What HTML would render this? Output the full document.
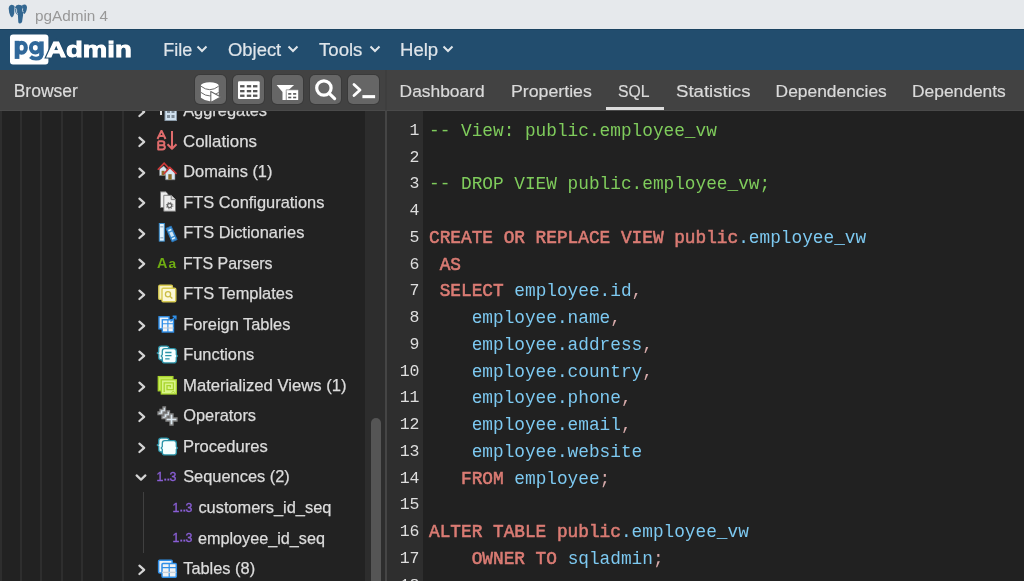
<!DOCTYPE html>
<html><head><meta charset="utf-8">
<style>
html,body{margin:0;padding:0;width:1024px;height:581px;overflow:hidden;background:#222;}
body{position:relative;font-family:"Liberation Sans",sans-serif;will-change:transform;}
.a{position:absolute;white-space:pre;}
#title{left:0;top:0;width:1024px;height:29px;background:#e6e9ec;}
#titleline{left:0;top:29px;width:1024px;height:1px;background:#1b4361;}
#menu{left:0;top:29px;width:1024px;height:41px;background:#224d6e;}
#hdr{left:0;top:70px;width:1024px;height:41px;background:#424242;}
#tree{left:0;top:111px;width:365px;height:470px;background:#222;overflow:hidden;}
#sbtrack{left:365px;top:111px;width:20px;height:470px;background:#2d2d2d;}
#sbthumb{left:371px;top:418px;width:10px;height:200px;background:#555;border-radius:5px;}
#divider{left:385px;top:70px;width:2px;height:40px;background:#3e3e3e;}
#divider2{left:385px;top:110px;width:2px;height:471px;background:#454545;}
#hline{left:0;top:110px;width:1024px;height:1px;background:#4a4a4a;}
#gutter{left:387px;top:111px;width:36px;height:470px;background:#2e2e2e;}
#code{left:423px;top:111px;width:601px;height:470px;background:#212121;}
.menuitem{color:#dfe5ea;-webkit-text-stroke:0.2px #dfe5ea;font-size:18px;line-height:20px;top:39.6px;}
.tab{color:#dadada;-webkit-text-stroke:0.2px #dadada;font-size:17.4px;line-height:20px;top:80.7px;transform-origin:0 0;}
.btn{position:absolute;top:75px;width:31px;height:29px;background:#666;border-radius:5px;box-shadow:0 0 0 1px #3a3a3a;}
.btn svg{position:absolute;left:0;top:0;}
.gl{position:absolute;top:111px;width:2px;height:470px;background:#2e2e2e;}
.row{position:absolute;color:#dcdcdc;line-height:20px;white-space:pre;-webkit-text-stroke:0.25px #dcdcdc;}
.ic{position:absolute;}
.ln{position:absolute;white-space:pre;color:#dedede;font-family:"Liberation Mono",monospace;text-align:right;width:30px;}
.cl{position:absolute;white-space:pre;left:429px;font-family:"Liberation Mono",monospace;color:#d6aaaa;}
.k{color:#db7c74;font-weight:normal;-webkit-text-stroke:0.55px #db7c74;display:inline-block;transform:scaleY(1.08);transform-origin:0 18.1px;}
.v{color:#7dc9f1;}
.c{color:#7fcc5c;}
.p{color:#d6aaaa;}
</style></head><body>
<div id="title" class="a"></div>
<div id="menu" class="a"></div>
<div id="titleline" class="a"></div>
<div id="hdr" class="a"></div>
<div id="tree" class="a"></div>
<div id="sbtrack" class="a"></div>
<div id="sbthumb" class="a"></div>
<div id="gutter" class="a"></div>
<div id="code" class="a"></div>
<div id="hline" class="a"></div>
<div id="divider" class="a"></div>
<div id="divider2" class="a"></div>
<svg class="a" style="left:0;top:0" width="32" height="28" viewBox="0 0 32 28"><g fill="#336791">
<path d="M8.7 8.5 Q8.8 5.4 11.5 4.8 Q13.6 4.7 14.6 6.3 L14.2 13.5 Q13.6 16.8 11.9 17.6 Q10 16 9.2 12.8 Z"/>
<path d="M15.1 7.2 Q15.8 4.6 18.5 4.7 Q21.5 4.6 22.6 6.2 L23.1 14.9 Q22.6 18 22.1 21.8 Q21.5 23.6 20 23.6 Q18.6 23.5 18.3 22.2 L17.9 14.9 Q15.7 13.8 15.3 11.9 Z"/>
<path d="M22.2 5 Q23.6 4.5 25.2 4.6 Q27.2 5.6 27 7.6 Q26.8 10 26.1 11.5 Q25.4 13.2 24.4 14 Q23 13.4 22.4 11.9 Z"/></g>
<g stroke="#e6e9ec" stroke-width="0.8" fill="none"><path d="M15.6 8 Q17.2 9.5 16.6 12.2 Q16.8 13.8 18 14.2"/><path d="M22.7 8.4 Q21.9 10.6 23.3 12.2"/></g>
</svg>
<div class="a" style="left:35px;top:6.8px;font-size:15.3px;line-height:18px;color:#989898">pgAdmin 4</div>
<svg class="a" style="left:0;top:29px" width="140" height="41" viewBox="0 0 140 41">
<rect x="10" y="5.6" width="38.4" height="29.9" rx="3" fill="#fff"/>
<g fill="none" stroke="#30689a">
<ellipse cx="21.6" cy="18.65" rx="4.2" ry="4.95" stroke-width="4.1"/>
<ellipse cx="35.3" cy="18.8" rx="4.4" ry="4.7" stroke-width="4"/>
<path d="M41.45 25.5 Q41.45 29.6 36 29.6 Q32.4 29.6 30.4 27.6" stroke-width="3.9"/>
</g>
<rect x="14.7" y="11.8" width="4.7" height="18.1" fill="#30689a"/>
<rect x="39.2" y="12.4" width="4.5" height="14" fill="#30689a"/>
<text x="46.2" y="28.4" font-family="Liberation Sans" font-weight="bold" font-size="22.5" textLength="85.5" lengthAdjust="spacingAndGlyphs" fill="#fff" stroke="#224d6e" stroke-width="3" paint-order="stroke fill">Admin</text>
<text x="46.2" y="28.4" font-family="Liberation Sans" font-weight="bold" font-size="22.5" textLength="85.5" lengthAdjust="spacingAndGlyphs" fill="#fff" stroke="#fff" stroke-width="0.9">Admin</text>
</svg>
<div class="a menuitem" style="left:163.2px">File</div>
<div class="a menuitem" style="left:228.4px;transform-origin:0 0;transform:scaleX(1.023)">Object</div>
<div class="a menuitem" style="left:319.3px;transform-origin:0 0;transform:scaleX(1.033)">Tools</div>
<div class="a menuitem" style="left:399.6px;transform-origin:0 0;transform:scaleX(1.03)">Help</div>
<svg class="a" style="left:196px;top:45px" width="12" height="8"><path d="M1.5 1.5 L6 6 L10.5 1.5" stroke="#dfe5ea" stroke-width="2" fill="none"/></svg>
<svg class="a" style="left:287px;top:45px" width="12" height="8"><path d="M1.5 1.5 L6 6 L10.5 1.5" stroke="#dfe5ea" stroke-width="2" fill="none"/></svg>
<svg class="a" style="left:369px;top:45px" width="12" height="8"><path d="M1.5 1.5 L6 6 L10.5 1.5" stroke="#dfe5ea" stroke-width="2" fill="none"/></svg>
<svg class="a" style="left:442px;top:45px" width="12" height="8"><path d="M1.5 1.5 L6 6 L10.5 1.5" stroke="#dfe5ea" stroke-width="2" fill="none"/></svg>
<div class="a" style="left:13.7px;top:80.8px;font-size:17.5px;line-height:20px;color:#dcdcdc;-webkit-text-stroke:0.2px #dcdcdc">Browser</div>
<div class="btn" style="left:195px"><svg width="31" height="29" viewBox="0 0 31 29"><path d="M5.9 10.5 A8.9 3.3 0 0 1 23.7 10.5 V22.8 Q14.8 29.6 5.9 22.8 Z" fill="#fff"/>
 <path d="M5.9 11.2 Q14.8 18.2 23.7 11.2 M5.9 17.4 Q14.8 24.4 23.7 17.4" stroke="#6a6a6a" stroke-width="1" fill="none"/>
 <path d="M15.8 16.4 V27.4 L25.8 21.9 Z" fill="#fff" stroke="#666" stroke-width="1.1" stroke-linejoin="round"/></svg></div>
<div class="btn" style="left:233.4px"><svg width="31" height="29" viewBox="0 0 31 29"><rect x="5" y="6.2" width="21.7" height="17.8" rx="1.2" fill="#fff"/>
 <g fill="#555"><rect x="7.1" y="10.1" width="4.4" height="2.3"/><rect x="13.8" y="10.1" width="4.4" height="2.3"/><rect x="20" y="10.1" width="4.4" height="2.3"/>
 <rect x="7.1" y="15" width="4.4" height="2.3"/><rect x="13.8" y="15" width="4.4" height="2.3"/><rect x="20" y="15" width="4.4" height="2.3"/>
 <rect x="7.1" y="19.6" width="4.4" height="2.3"/><rect x="13.8" y="19.6" width="4.4" height="2.3"/><rect x="20" y="19.6" width="4.4" height="2.3"/></g></svg></div>
<div class="btn" style="left:271.6px"><svg width="31" height="29" viewBox="0 0 31 29"><path d="M4.6 10.1 H22.1 L14.4 17 V25 H10.5 V17 Z" fill="#fff"/>
 <rect x="14.4" y="15" width="11.8" height="10" fill="#fff"/><path d="M14.2 25 V14.8 H26.2" stroke="#8a8a8a" stroke-width="0.8" fill="none"/>
 <g fill="#555"><rect x="16.2" y="18.1" width="3.1" height="1.6"/><rect x="21.1" y="18.1" width="3.1" height="1.6"/><rect x="16.2" y="21.7" width="3.1" height="1.6"/><rect x="21.1" y="21.7" width="3.1" height="1.6"/></g></svg></div>
<div class="btn" style="left:309.8px"><svg width="31" height="29" viewBox="0 0 31 29"><circle cx="13.9" cy="13" r="7.2" fill="none" stroke="#fff" stroke-width="3.2"/>
 <path d="M19.2 18.4 L24.6 23.6" stroke="#fff" stroke-width="3.2" stroke-linecap="round"/></svg></div>
<div class="btn" style="left:348px"><svg width="31" height="29" viewBox="0 0 31 29"><path d="M6 9.4 L12 15 L6 20.6" fill="none" stroke="#fff" stroke-width="2.8" stroke-linecap="round" stroke-linejoin="round"/>
 <rect x="14.4" y="20.1" width="12.7" height="3.1" fill="#fff"/></svg></div>
<div class="a tab" style="left:399.6px;transform:scaleX(1)">Dashboard</div>
<div class="a tab" style="left:511.2px;transform:scaleX(1.02)">Properties</div>
<div class="a tab" style="left:618.3px;transform:scaleX(0.906)">SQL</div>
<div class="a tab" style="left:675.8px;transform:scaleX(1.07)">Statistics</div>
<div class="a tab" style="left:775.6px;transform:scaleX(1)">Dependencies</div>
<div class="a tab" style="left:912px;transform:scaleX(1)">Dependents</div>
<div class="a" style="left:606px;top:107px;width:57.5px;height:3px;background:#dcdcdc"></div>
<div class="gl" style="left:0px"></div>
<div class="gl" style="left:20px"></div>
<div class="gl" style="left:40.2px"></div>
<div class="gl" style="left:60.6px"></div>
<div class="gl" style="left:81.1px"></div>
<div class="gl" style="left:101.6px"></div>
<div class="gl" style="left:122.1px"></div>
<div class="a" style="left:0;top:111px;width:365px;height:470px;overflow:hidden">
<div class="a" style="left:142.5px;top:380.8px;width:1.5px;height:61px;background:#404040"></div>
<div class="row" style="left:183.2px;top:-10.90px;font-size:16.4px;transform-origin:0 0;transform:scaleX(1)">Aggregates</div>
<svg class="ic" style="left:136.8px;top:-6.20px" width="10" height="14"><path d="M2.4 2.6 L7.2 6.8 L2.4 11" stroke="#d4d4d4" stroke-width="2.2" stroke-linecap="round" stroke-linejoin="round" fill="none"/></svg>
<svg class="ic" style="left:156px;top:-11.20px" width="22" height="22" viewBox="0 0 22 22"><rect x="9" y="6" width="11.5" height="14.5" fill="#cfe0ee" stroke="#8a9aa8" stroke-width="1"/>
<rect x="11" y="10" width="3" height="3" fill="#7d8a96"/><rect x="15.5" y="10" width="3" height="3" fill="#7d8a96"/>
<rect x="11" y="15" width="3" height="3" fill="#7d8a96"/><rect x="15.5" y="15" width="3" height="3" fill="#7d8a96"/>
<rect x="4" y="8" width="2" height="7" fill="#ddd"/></svg>
<div class="row" style="left:183.2px;top:19.63px;font-size:16.4px;transform-origin:0 0;transform:scaleX(1.028)">Collations</div>
<svg class="ic" style="left:136.8px;top:24.33px" width="10" height="14"><path d="M2.4 2.6 L7.2 6.8 L2.4 11" stroke="#d4d4d4" stroke-width="2.2" stroke-linecap="round" stroke-linejoin="round" fill="none"/></svg>
<svg class="ic" style="left:156px;top:19.33px" width="22" height="22" viewBox="0 0 22 22"><g stroke="#e06c6c" stroke-width="2" fill="none" stroke-linejoin="round">
<path d="M1.5 9 L5.5 0.6 L9.5 9 M3.1 6.1 H7.9"/>
<path d="M2.2 11.2 V19.4 H6.4 Q8.9 19.4 8.9 17.3 Q8.9 15.2 6.3 15.2 H2.2 M2.2 15.2 H6 Q8.4 15.2 8.4 13.2 Q8.4 11.2 6 11.2 H2.2"/>
<path d="M16 1 V19 M11.5 14.3 L16 18.8 L20.5 14.3"/></g></svg>
<div class="row" style="left:183.2px;top:50.16px;font-size:16.4px;transform-origin:0 0;transform:scaleX(1)">Domains (1)</div>
<svg class="ic" style="left:136.8px;top:54.86px" width="10" height="14"><path d="M2.4 2.6 L7.2 6.8 L2.4 11" stroke="#d4d4d4" stroke-width="2.2" stroke-linecap="round" stroke-linejoin="round" fill="none"/></svg>
<svg class="ic" style="left:156px;top:49.86px" width="22" height="22" viewBox="0 0 22 22"><g>
<path d="M3.5 8 V14.5 H10.5 V8 L7.7 5 Z" fill="#d6e6f2" stroke="#777" stroke-width="0.6"/>
<path d="M1.8 8.8 L8.1 2.2 L13 7.2" stroke="#d13a3a" stroke-width="1.6" fill="none"/>
<rect x="5.6" y="9.8" width="3" height="4.5" fill="#8a6a2a"/>
<path d="M9.5 12 V18.8 H19 V12 L14 7 Z" fill="#d6e6f2" stroke="#777" stroke-width="0.6"/>
<path d="M7.6 13 L13.8 6.4 L20.6 12.9" stroke="#d13a3a" stroke-width="1.6" fill="none"/>
<rect x="12.3" y="13.2" width="3.4" height="5.4" fill="#8a6a2a"/></g></svg>
<div class="row" style="left:183.2px;top:80.69px;font-size:16.4px;transform-origin:0 0;transform:scaleX(1)">FTS Configurations</div>
<svg class="ic" style="left:136.8px;top:85.39px" width="10" height="14"><path d="M2.4 2.6 L7.2 6.8 L2.4 11" stroke="#d4d4d4" stroke-width="2.2" stroke-linecap="round" stroke-linejoin="round" fill="none"/></svg>
<svg class="ic" style="left:156px;top:80.39px" width="22" height="22" viewBox="0 0 22 22"><path d="M4.5 0.8 H10 L12 3 V16.5 H4.5 Z" fill="#eee" stroke="#777" stroke-width="0.9"/>
<path d="M7.8 4.3 H15.2 L19.5 8.6 V20.2 H7.8 Z" fill="#efefef" stroke="#777" stroke-width="0.9"/>
<path d="M15.2 4.3 V8.6 H19.5" fill="#ddd" stroke="#777" stroke-width="0.9"/>
<circle cx="13.6" cy="14.6" r="2.1" fill="none" stroke="#666" stroke-width="1.3"/>
<circle cx="13.6" cy="14.6" r="3.3" fill="none" stroke="#777" stroke-width="1" stroke-dasharray="1.3 1.3"/></svg>
<div class="row" style="left:183.2px;top:111.22px;font-size:16.4px;transform-origin:0 0;transform:scaleX(1)">FTS Dictionaries</div>
<svg class="ic" style="left:136.8px;top:115.92px" width="10" height="14"><path d="M2.4 2.6 L7.2 6.8 L2.4 11" stroke="#d4d4d4" stroke-width="2.2" stroke-linecap="round" stroke-linejoin="round" fill="none"/></svg>
<svg class="ic" style="left:156px;top:110.92px" width="22" height="22" viewBox="0 0 22 22"><rect x="3.3" y="1.5" width="5" height="17.6" fill="#e6f4fc" stroke="#3c8fcf" stroke-width="1"/>
<rect x="4.3" y="4.2" width="3" height="1.2" fill="#9ab"/><rect x="4.3" y="15.2" width="3" height="1.2" fill="#9ab"/>
<g transform="rotate(-24 15.6 12)"><rect x="12.8" y="4.6" width="5.6" height="14.8" fill="#3d90d2" stroke="#2a74b8" stroke-width="0.8"/>
<rect x="14" y="7" width="3.2" height="1.5" fill="#e8f4fc"/><rect x="14" y="10" width="3.2" height="4.5" fill="#cfe6f7"/><rect x="14" y="16" width="3.2" height="1.5" fill="#e8f4fc"/></g></svg>
<div class="row" style="left:183.2px;top:141.75px;font-size:16.4px;transform-origin:0 0;transform:scaleX(0.974)">FTS Parsers</div>
<svg class="ic" style="left:136.8px;top:146.45px" width="10" height="14"><path d="M2.4 2.6 L7.2 6.8 L2.4 11" stroke="#d4d4d4" stroke-width="2.2" stroke-linecap="round" stroke-linejoin="round" fill="none"/></svg>
<svg class="ic" style="left:156px;top:141.45px" width="22" height="22" viewBox="0 0 22 22"><text x="1" y="16.4" font-family="Liberation Sans" font-weight="bold" font-size="14.6" fill="#6fad12" textLength="10.4" lengthAdjust="spacingAndGlyphs">A</text>
<text x="12.4" y="16.4" font-family="Liberation Sans" font-weight="bold" font-size="13" fill="#6fad12" textLength="7.6" lengthAdjust="spacingAndGlyphs">a</text></svg>
<div class="row" style="left:183.2px;top:172.28px;font-size:16.4px;transform-origin:0 0;transform:scaleX(1)">FTS Templates</div>
<svg class="ic" style="left:136.8px;top:176.98px" width="10" height="14"><path d="M2.4 2.6 L7.2 6.8 L2.4 11" stroke="#d4d4d4" stroke-width="2.2" stroke-linecap="round" stroke-linejoin="round" fill="none"/></svg>
<svg class="ic" style="left:156px;top:171.98px" width="22" height="22" viewBox="0 0 22 22"><rect x="2.8" y="2.2" width="13.6" height="14.2" rx="1.2" fill="#f7f2c4" stroke="#d8cb52" stroke-width="1.4"/>
<rect x="6" y="5.2" width="13.8" height="13.6" rx="1.2" fill="#fbf8d8" stroke="#d8cb52" stroke-width="1.4"/>
<circle cx="12" cy="11.3" r="2.6" fill="none" stroke="#cbbd45" stroke-width="1.3"/>
<path d="M13.9 13.2 L16.3 15.6" stroke="#cbbd45" stroke-width="1.4"/></svg>
<div class="row" style="left:183.2px;top:202.81px;font-size:16.4px;transform-origin:0 0;transform:scaleX(1)">Foreign Tables</div>
<svg class="ic" style="left:136.8px;top:207.51px" width="10" height="14"><path d="M2.4 2.6 L7.2 6.8 L2.4 11" stroke="#d4d4d4" stroke-width="2.2" stroke-linecap="round" stroke-linejoin="round" fill="none"/></svg>
<svg class="ic" style="left:156px;top:202.51px" width="22" height="22" viewBox="0 0 22 22"><rect x="3" y="2.8" width="10" height="12" fill="#eef4fa" stroke="#2f8fe8" stroke-width="1.4"/>
<rect x="6.3" y="5.8" width="11.2" height="12.2" fill="#f2f5f8" stroke="#2f8fe8" stroke-width="1.4"/>
<path d="M6.3 9.8 H17.5 M11.9 5.8 V18" stroke="#2f8fe8" stroke-width="1.1"/>
<path d="M6.3 14 H17.5" stroke="#bcc8d4" stroke-width="1"/>
<path d="M14.5 7.5 L19.6 2.6 M16.6 2.3 H19.9 V5.6" stroke="#2f8fe8" stroke-width="1.4" fill="none"/></svg>
<div class="row" style="left:183.2px;top:233.34px;font-size:16.4px;transform-origin:0 0;transform:scaleX(1)">Functions</div>
<svg class="ic" style="left:136.8px;top:238.04px" width="10" height="14"><path d="M2.4 2.6 L7.2 6.8 L2.4 11" stroke="#d4d4d4" stroke-width="2.2" stroke-linecap="round" stroke-linejoin="round" fill="none"/></svg>
<svg class="ic" style="left:156px;top:233.04px" width="22" height="22" viewBox="0 0 22 22"><path d="M5.2 2.1 H10.5 Q13 2.1 13 4.6 V14 Q13 16 10.5 16 H5.2 Q2.7 16 2.7 13.5 V10.3 L1.3 9.1 L2.7 7.9 V4.6 Q2.7 2.1 5.2 2.1 Z" fill="#effafa" stroke="#2a93a8" stroke-width="1.3"/><path d="M8.8 4.7 H17.8 Q20.3 4.7 20.3 7.2 V10.6 L21.4 12 L20.3 13.4 V16.4 Q20.3 18.9 17.8 18.9 H8.8 Q6.3 18.9 6.3 16.4 V13.4 L5.2 12 L6.3 10.6 V7.2 Q6.3 4.7 8.8 4.7 Z" fill="#f6ffff" stroke="#2a93a8" stroke-width="1.3"/><path d="M9.2 8.5 H15.5 M9.2 11.6 H15.5 M9.2 14.9 H13.6" stroke="#2a93a8" stroke-width="1.4"/></svg>
<div class="row" style="left:183.2px;top:263.87px;font-size:16.4px;transform-origin:0 0;transform:scaleX(1.017)">Materialized Views (1)</div>
<svg class="ic" style="left:136.8px;top:268.57px" width="10" height="14"><path d="M2.4 2.6 L7.2 6.8 L2.4 11" stroke="#d4d4d4" stroke-width="2.2" stroke-linecap="round" stroke-linejoin="round" fill="none"/></svg>
<svg class="ic" style="left:156px;top:263.57px" width="22" height="22" viewBox="0 0 22 22"><rect x="2.3" y="1.6" width="14.6" height="14.2" fill="#c9ec5e" stroke="#a8d42c" stroke-width="1.3"/>
<rect x="5.3" y="4.8" width="15" height="14.2" fill="#d9f58a" stroke="#a8d42c" stroke-width="1.3"/>
<path d="M8.2 17 V7.8 H17.4 V14.6 H11 V10.6 H14.4 V12.4" fill="none" stroke="#a8d42c" stroke-width="1.3"/>
<path d="M15.5 17.5 L17.2 16.4 L18.9 17.5" fill="none" stroke="#a8d42c" stroke-width="1"/></svg>
<div class="row" style="left:183.2px;top:294.40px;font-size:16.4px;transform-origin:0 0;transform:scaleX(1)">Operators</div>
<svg class="ic" style="left:136.8px;top:299.10px" width="10" height="14"><path d="M2.4 2.6 L7.2 6.8 L2.4 11" stroke="#d4d4d4" stroke-width="2.2" stroke-linecap="round" stroke-linejoin="round" fill="none"/></svg>
<svg class="ic" style="left:156px;top:294.10px" width="22" height="22" viewBox="0 0 22 22"><g fill="#dde8f0" stroke="#858585" stroke-width="1.3">
<path d="M4 4.5 H7 V2 H9.5 V7 H7 V9.5 H2 V7 H4 Z"/>
<path d="M8 8.5 H11 V6 H13.5 V11 H11 V13.5 H6 V11 H8 Z"/>
<path d="M14 9 H17 V13 H21 V16 H17 V20 H14 V16 H10 V13 H14 Z"/></g></svg>
<div class="row" style="left:183.2px;top:324.93px;font-size:16.4px;transform-origin:0 0;transform:scaleX(1.01)">Procedures</div>
<svg class="ic" style="left:136.8px;top:329.63px" width="10" height="14"><path d="M2.4 2.6 L7.2 6.8 L2.4 11" stroke="#d4d4d4" stroke-width="2.2" stroke-linecap="round" stroke-linejoin="round" fill="none"/></svg>
<svg class="ic" style="left:156px;top:324.63px" width="22" height="22" viewBox="0 0 22 22"><path d="M5.2 2.1 H10.5 Q13 2.1 13 4.6 V14 Q13 16 10.5 16 H5.2 Q2.7 16 2.7 13.5 V10.3 L1.3 9.1 L2.7 7.9 V4.6 Q2.7 2.1 5.2 2.1 Z" fill="#effafa" stroke="#2a93a8" stroke-width="1.3"/><path d="M8.8 4.7 H17.8 Q20.3 4.7 20.3 7.2 V10.6 L21.4 12 L20.3 13.4 V16.4 Q20.3 18.9 17.8 18.9 H8.8 Q6.3 18.9 6.3 16.4 V13.4 L5.2 12 L6.3 10.6 V7.2 Q6.3 4.7 8.8 4.7 Z" fill="#f6ffff" stroke="#2a93a8" stroke-width="1.3"/></svg>
<div class="row" style="left:183.2px;top:355.46px;font-size:16.4px;transform-origin:0 0;transform:scaleX(1)">Sequences (2)</div>
<svg class="ic" style="left:134.2px;top:361.76px" width="14" height="10"><path d="M2.6 2.4 L7 6.6 L11.4 2.4" stroke="#d4d4d4" stroke-width="2.2" stroke-linecap="round" stroke-linejoin="round" fill="none"/></svg>
<svg class="ic" style="left:156px;top:355.16px" width="22" height="22" viewBox="0 0 22 22"><g fill="#8a5fd6"><text x="0.6" y="14.6" font-family="Liberation Sans" font-size="12.4" stroke="#8a5fd6" stroke-width="0.35">1</text>
<rect x="8.3" y="12.6" width="1.9" height="2"/><rect x="11.4" y="12.6" width="1.9" height="2"/>
<text x="13.4" y="14.6" font-family="Liberation Sans" font-size="12.4" stroke="#8a5fd6" stroke-width="0.35">3</text></g></svg>
<div class="row" style="left:198.4px;top:385.99px;font-size:16.4px;transform-origin:0 0;transform:scaleX(1)">customers_id_seq</div>
<svg class="ic" style="left:172px;top:385.69px" width="22" height="22" viewBox="0 0 22 22"><g fill="#8a5fd6"><text x="0.6" y="14.6" font-family="Liberation Sans" font-size="12.4" stroke="#8a5fd6" stroke-width="0.35">1</text>
<rect x="8.3" y="12.6" width="1.9" height="2"/><rect x="11.4" y="12.6" width="1.9" height="2"/>
<text x="13.4" y="14.6" font-family="Liberation Sans" font-size="12.4" stroke="#8a5fd6" stroke-width="0.35">3</text></g></svg>
<div class="row" style="left:198.4px;top:416.52px;font-size:16.4px;transform-origin:0 0;transform:scaleX(0.988)">employee_id_seq</div>
<svg class="ic" style="left:172px;top:416.22px" width="22" height="22" viewBox="0 0 22 22"><g fill="#8a5fd6"><text x="0.6" y="14.6" font-family="Liberation Sans" font-size="12.4" stroke="#8a5fd6" stroke-width="0.35">1</text>
<rect x="8.3" y="12.6" width="1.9" height="2"/><rect x="11.4" y="12.6" width="1.9" height="2"/>
<text x="13.4" y="14.6" font-family="Liberation Sans" font-size="12.4" stroke="#8a5fd6" stroke-width="0.35">3</text></g></svg>
<div class="row" style="left:183.2px;top:447.05px;font-size:16.4px;transform-origin:0 0;transform:scaleX(1)">Tables (8)</div>
<svg class="ic" style="left:136.8px;top:451.75px" width="10" height="14"><path d="M2.4 2.6 L7.2 6.8 L2.4 11" stroke="#d4d4d4" stroke-width="2.2" stroke-linecap="round" stroke-linejoin="round" fill="none"/></svg>
<svg class="ic" style="left:156px;top:446.75px" width="22" height="22" viewBox="0 0 22 22"><rect x="2.6" y="2.3" width="13.6" height="12.7" rx="1" fill="#eef2f6" stroke="#2f8fe8" stroke-width="1.5"/>
<rect x="6" y="5.6" width="14.3" height="13.6" rx="1" fill="#f1f3f5" stroke="#2f8fe8" stroke-width="1.5"/>
<path d="M6 9.6 H20.3 M13.2 5.6 V19.2" stroke="#2f8fe8" stroke-width="1.2"/>
<path d="M6 14.4 H20.3" stroke="#c8cfd6" stroke-width="1.4"/></svg>
</div>
<div class="a" style="left:0;top:111px;width:1024px;height:470px;overflow:hidden">
<div class="ln" style="left:389.5px;top:7.00px;font-size:16.5px;line-height:26.74px">1</div>
<div class="cl" style="top:7.00px;font-size:17.78px;line-height:26.74px"><span class="c">-- View: public.employee_vw</span></div>
<div class="ln" style="left:389.5px;top:33.74px;font-size:16.5px;line-height:26.74px">2</div>
<div class="ln" style="left:389.5px;top:60.48px;font-size:16.5px;line-height:26.74px">3</div>
<div class="cl" style="top:60.48px;font-size:17.78px;line-height:26.74px"><span class="c">-- DROP VIEW public.employee_vw;</span></div>
<div class="ln" style="left:389.5px;top:87.22px;font-size:16.5px;line-height:26.74px">4</div>
<div class="ln" style="left:389.5px;top:113.96px;font-size:16.5px;line-height:26.74px">5</div>
<div class="cl" style="top:113.96px;font-size:17.78px;line-height:26.74px"><span class="k">CREATE OR REPLACE VIEW public</span><span class="v">.employee_vw</span></div>
<div class="ln" style="left:389.5px;top:140.70px;font-size:16.5px;line-height:26.74px">6</div>
<div class="cl" style="top:140.70px;font-size:17.78px;line-height:26.74px"> <span class="k">AS</span></div>
<div class="ln" style="left:389.5px;top:167.44px;font-size:16.5px;line-height:26.74px">7</div>
<div class="cl" style="top:167.44px;font-size:17.78px;line-height:26.74px"> <span class="k">SELECT</span> <span class="v">employee.id</span><span class="p">,</span></div>
<div class="ln" style="left:389.5px;top:194.18px;font-size:16.5px;line-height:26.74px">8</div>
<div class="cl" style="top:194.18px;font-size:17.78px;line-height:26.74px">    <span class="v">employee.name</span><span class="p">,</span></div>
<div class="ln" style="left:389.5px;top:220.92px;font-size:16.5px;line-height:26.74px">9</div>
<div class="cl" style="top:220.92px;font-size:17.78px;line-height:26.74px">    <span class="v">employee.address</span><span class="p">,</span></div>
<div class="ln" style="left:389.5px;top:247.66px;font-size:16.5px;line-height:26.74px">10</div>
<div class="cl" style="top:247.66px;font-size:17.78px;line-height:26.74px">    <span class="v">employee.country</span><span class="p">,</span></div>
<div class="ln" style="left:389.5px;top:274.40px;font-size:16.5px;line-height:26.74px">11</div>
<div class="cl" style="top:274.40px;font-size:17.78px;line-height:26.74px">    <span class="v">employee.phone</span><span class="p">,</span></div>
<div class="ln" style="left:389.5px;top:301.14px;font-size:16.5px;line-height:26.74px">12</div>
<div class="cl" style="top:301.14px;font-size:17.78px;line-height:26.74px">    <span class="v">employee.email</span><span class="p">,</span></div>
<div class="ln" style="left:389.5px;top:327.88px;font-size:16.5px;line-height:26.74px">13</div>
<div class="cl" style="top:327.88px;font-size:17.78px;line-height:26.74px">    <span class="v">employee.website</span></div>
<div class="ln" style="left:389.5px;top:354.62px;font-size:16.5px;line-height:26.74px">14</div>
<div class="cl" style="top:354.62px;font-size:17.78px;line-height:26.74px">   <span class="k">FROM</span> <span class="v">employee</span><span class="p">;</span></div>
<div class="ln" style="left:389.5px;top:381.36px;font-size:16.5px;line-height:26.74px">15</div>
<div class="ln" style="left:389.5px;top:408.10px;font-size:16.5px;line-height:26.74px">16</div>
<div class="cl" style="top:408.10px;font-size:17.78px;line-height:26.74px"><span class="k">ALTER TABLE public</span><span class="v">.employee_vw</span></div>
<div class="ln" style="left:389.5px;top:434.84px;font-size:16.5px;line-height:26.74px">17</div>
<div class="cl" style="top:434.84px;font-size:17.78px;line-height:26.74px">    <span class="k">OWNER TO</span> <span class="v">sqladmin</span><span class="p">;</span></div>
<div class="ln" style="left:389.5px;top:461.58px;font-size:16.5px;line-height:26.74px">18</div>
</div>
</body></html>
